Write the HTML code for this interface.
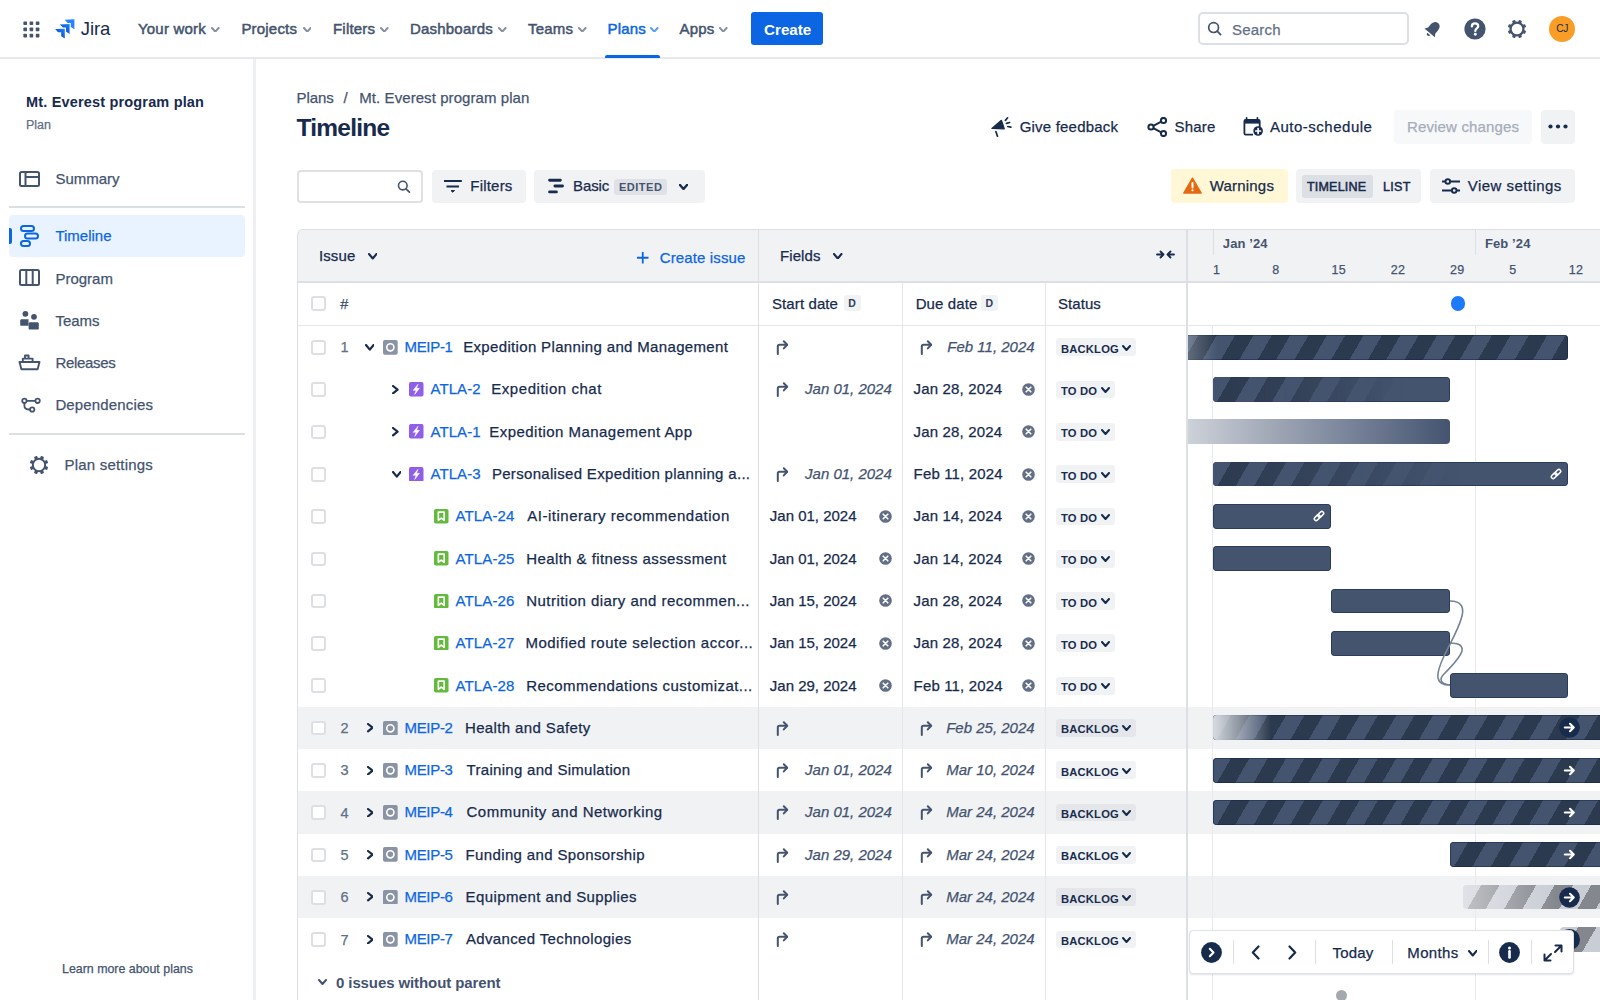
<!DOCTYPE html>
<html><head><meta charset="utf-8">
<style>
*{box-sizing:border-box;margin:0;padding:0}
html,body{width:1600px;height:1000px;overflow:hidden;background:#fff;font-family:"Liberation Sans",sans-serif;color:#172B4D}
.a{position:absolute;white-space:nowrap}
.m{-webkit-text-stroke:0.25px currentColor}
.m2{-webkit-text-stroke:0.5px currentColor}
svg{display:block}
</style></head><body>
<div class="a" style="left:0px;top:57px;width:1600px;height:2px;background:#E6E8EC;"></div>
<svg class="a" style="left:23px;top:20.5px;" width="17" height="17" viewBox="0 0 17 17"><g fill="#44546F"><rect x="0.4" y="0.4" width="3.6" height="3.6" rx="0.7"/><rect x="0.4" y="6.6" width="3.6" height="3.6" rx="0.7"/><rect x="0.4" y="12.8" width="3.6" height="3.6" rx="0.7"/><rect x="6.6" y="0.4" width="3.6" height="3.6" rx="0.7"/><rect x="6.6" y="6.6" width="3.6" height="3.6" rx="0.7"/><rect x="6.6" y="12.8" width="3.6" height="3.6" rx="0.7"/><rect x="12.8" y="0.4" width="3.6" height="3.6" rx="0.7"/><rect x="12.8" y="6.6" width="3.6" height="3.6" rx="0.7"/><rect x="12.8" y="12.8" width="3.6" height="3.6" rx="0.7"/></g></svg>
<svg class="a" style="left:54.5px;top:19px;" width="21" height="20" viewBox="0 0 21 20"><defs><linearGradient id="jg1" x1="1" y1="0" x2="0.3" y2="0.7"><stop offset="0" stop-color="#2684FF"/><stop offset="1" stop-color="#0052CC"/></linearGradient></defs><path transform="translate(9.7 0.3)" d="M0 0.4 L9.7 0 L9.7 9.9 L6.1 7.6 L6.1 3.6 L3.0 3.6 Z" fill="#2684FF"/><path transform="translate(4.9 5.0)" d="M0 0.4 L9.7 0 L9.7 9.9 L6.1 7.6 L6.1 3.6 L3.0 3.6 Z" fill="url(#jg1)"/><path transform="translate(0.1 9.7)" d="M0 0.4 L9.7 0 L9.7 9.9 L6.1 7.6 L6.1 3.6 L3.0 3.6 Z" fill="url(#jg1)"/></svg>
<div class="a " style="left:80.80px;top:19.59px;font-size:18.5px;line-height:18.5px;color:#172B4D;font-weight:400;font-style:normal;letter-spacing:-0.1px;">Jira</div>
<div class="a m2" style="left:138.00px;top:21.14px;font-size:15px;line-height:15px;color:#44546F;font-weight:400;font-style:normal;letter-spacing:0.2px;">Your work</div>
<svg class="a" style="left:211.3px;top:26.6px;" width="8.6" height="5.6" viewBox="0 0 8.6 5.6"><path d="M1 1L4.3 4.6L7.6 1" fill="none" stroke="#8590A2" stroke-width="2.0" stroke-linecap="round" stroke-linejoin="round"/></svg>
<div class="a m2" style="left:241.40px;top:21.14px;font-size:15px;line-height:15px;color:#44546F;font-weight:400;font-style:normal;letter-spacing:0.2px;">Projects</div>
<svg class="a" style="left:302.90000000000003px;top:26.6px;" width="8.6" height="5.6" viewBox="0 0 8.6 5.6"><path d="M1 1L4.3 4.6L7.6 1" fill="none" stroke="#8590A2" stroke-width="2.0" stroke-linecap="round" stroke-linejoin="round"/></svg>
<div class="a m2" style="left:333.00px;top:21.14px;font-size:15px;line-height:15px;color:#44546F;font-weight:400;font-style:normal;letter-spacing:0.2px;">Filters</div>
<svg class="a" style="left:380.3px;top:26.6px;" width="8.6" height="5.6" viewBox="0 0 8.6 5.6"><path d="M1 1L4.3 4.6L7.6 1" fill="none" stroke="#8590A2" stroke-width="2.0" stroke-linecap="round" stroke-linejoin="round"/></svg>
<div class="a m2" style="left:410.00px;top:21.14px;font-size:15px;line-height:15px;color:#44546F;font-weight:400;font-style:normal;letter-spacing:0.2px;">Dashboards</div>
<svg class="a" style="left:498.1px;top:26.6px;" width="8.6" height="5.6" viewBox="0 0 8.6 5.6"><path d="M1 1L4.3 4.6L7.6 1" fill="none" stroke="#8590A2" stroke-width="2.0" stroke-linecap="round" stroke-linejoin="round"/></svg>
<div class="a m2" style="left:528.00px;top:21.14px;font-size:15px;line-height:15px;color:#44546F;font-weight:400;font-style:normal;letter-spacing:0.2px;">Teams</div>
<svg class="a" style="left:578.3px;top:26.6px;" width="8.6" height="5.6" viewBox="0 0 8.6 5.6"><path d="M1 1L4.3 4.6L7.6 1" fill="none" stroke="#8590A2" stroke-width="2.0" stroke-linecap="round" stroke-linejoin="round"/></svg>
<div class="a m2" style="left:607.50px;top:21.14px;font-size:15px;line-height:15px;color:#0C66E4;font-weight:400;font-style:normal;letter-spacing:0.2px;">Plans</div>
<svg class="a" style="left:650.3px;top:26.6px;" width="8.6" height="5.6" viewBox="0 0 8.6 5.6"><path d="M1 1L4.3 4.6L7.6 1" fill="none" stroke="#579DFF" stroke-width="2.0" stroke-linecap="round" stroke-linejoin="round"/></svg>
<div class="a m2" style="left:679.50px;top:21.14px;font-size:15px;line-height:15px;color:#44546F;font-weight:400;font-style:normal;letter-spacing:0.2px;">Apps</div>
<svg class="a" style="left:719.3px;top:26.6px;" width="8.6" height="5.6" viewBox="0 0 8.6 5.6"><path d="M1 1L4.3 4.6L7.6 1" fill="none" stroke="#8590A2" stroke-width="2.0" stroke-linecap="round" stroke-linejoin="round"/></svg>
<div class="a" style="left:605px;top:55px;width:55px;height:3px;background:#0C66E4;border-radius:2px 2px 0 0"></div>
<div class="a" style="left:751px;top:12px;width:72px;height:33px;background:#0C66E4;border-radius:3px"></div>
<div class="a " style="left:764.00px;top:21.62px;font-size:15.2px;line-height:15.2px;color:#fff;font-weight:700;font-style:normal;letter-spacing:0px;">Create</div>
<div class="a" style="left:1198px;top:12px;width:211px;height:33px;border:2px solid #DCDFE4;border-radius:5px;background:#fff"></div>
<svg class="a" style="left:1207px;top:21px;" width="16" height="16" viewBox="0 0 16 16"><circle cx="6.6" cy="6.6" r="4.9" fill="none" stroke="#44546F" stroke-width="1.7"/><path d="M10.2 10.2L13.6 13.6" stroke="#44546F" stroke-width="1.8" stroke-linecap="round"/></svg>
<div class="a m" style="left:1232.00px;top:21.64px;font-size:15px;line-height:15px;color:#626F86;font-weight:400;font-style:normal;letter-spacing:0.2px;">Search</div>
<svg class="a" style="left:1422px;top:18px;" width="22" height="22" viewBox="0 0 22 22"><g transform="rotate(40 11 11)" fill="#44546F"><path d="M11 3.2C7.6 3.2 6.3 6 6.3 9.2V13L4.2 16.2H17.8L15.7 13V9.2C15.7 6 14.4 3.2 11 3.2Z"/><path d="M9 17.6H13C13 18.8 12.1 19.6 11 19.6C9.9 19.6 9 18.8 9 17.6Z"/></g></svg>
<svg class="a" style="left:1464px;top:17.5px;" width="22" height="22" viewBox="0 0 22 22"><circle cx="11" cy="11" r="10.6" fill="#44546F"/><path d="M7.9 8.4C7.9 6.5 9.3 5.4 11 5.4C12.8 5.4 14.2 6.5 14.2 8.2C14.2 10.4 11.3 10.5 11.3 12.9" fill="none" stroke="#fff" stroke-width="2.3" stroke-linecap="round"/><circle cx="11.3" cy="16.3" r="1.45" fill="#fff"/></svg>
<svg class="a" style="left:1507.2px;top:18.7px;" width="20" height="20" viewBox="0 0 20 20"><circle cx="10.0" cy="10.0" r="7.6" fill="#44546F"/><rect x="8.35" y="0.6999999999999993" width="3.3" height="9.3" rx="0.8" fill="#44546F" transform="rotate(22.5 10.0 10.0)"/><rect x="8.35" y="0.6999999999999993" width="3.3" height="9.3" rx="0.8" fill="#44546F" transform="rotate(67.5 10.0 10.0)"/><rect x="8.35" y="0.6999999999999993" width="3.3" height="9.3" rx="0.8" fill="#44546F" transform="rotate(112.5 10.0 10.0)"/><rect x="8.35" y="0.6999999999999993" width="3.3" height="9.3" rx="0.8" fill="#44546F" transform="rotate(157.5 10.0 10.0)"/><rect x="8.35" y="0.6999999999999993" width="3.3" height="9.3" rx="0.8" fill="#44546F" transform="rotate(202.5 10.0 10.0)"/><rect x="8.35" y="0.6999999999999993" width="3.3" height="9.3" rx="0.8" fill="#44546F" transform="rotate(247.5 10.0 10.0)"/><rect x="8.35" y="0.6999999999999993" width="3.3" height="9.3" rx="0.8" fill="#44546F" transform="rotate(292.5 10.0 10.0)"/><rect x="8.35" y="0.6999999999999993" width="3.3" height="9.3" rx="0.8" fill="#44546F" transform="rotate(337.5 10.0 10.0)"/><circle cx="10.0" cy="10.0" r="5.3" fill="#fff"/></svg>
<div class="a" style="left:1548.5px;top:15.5px;width:26px;height:26px;border-radius:50%;background:#F99D26"></div>
<div class="a " style="left:1556.30px;top:23.87px;font-size:10.2px;line-height:10.2px;color:#172B4D;font-weight:400;font-style:normal;letter-spacing:-0.3px;">CJ</div>
<div class="a" style="left:253px;top:59px;width:3px;height:941px;background:#EEEFF2;"></div>
<div class="a " style="left:26.00px;top:95.11px;font-size:14.5px;line-height:14.5px;color:#172B4D;font-weight:700;font-style:normal;letter-spacing:0.17px;">Mt. Everest program plan</div>
<div class="a m" style="left:26.00px;top:119.37px;font-size:12.5px;line-height:12.5px;color:#626F86;font-weight:400;font-style:normal;letter-spacing:0px;">Plan</div>
<svg class="a" style="left:19px;top:171px;" width="21" height="16" viewBox="0 0 21 16"><rect x="1" y="1" width="19" height="14" rx="1.5" fill="none" stroke="#44546F" stroke-width="2"/><path d="M6.5 1V15M6.5 6H20" stroke="#44546F" stroke-width="2"/></svg>
<div class="a m" style="left:55.40px;top:170.84px;font-size:15px;line-height:15px;color:#44546F;font-weight:400;font-style:normal;letter-spacing:0px;">Summary</div>
<div class="a" style="left:9px;top:206px;width:236px;height:2px;background:#DCDFE4;"></div>
<div class="a" style="left:9px;top:215px;width:236px;height:41.6px;background:#E9F2FF;border-radius:4px"></div>
<div class="a" style="left:9px;top:228px;width:3.4px;height:16px;background:#0C66E4;border-radius:0 2px 2px 0"></div>
<svg class="a" style="left:20px;top:225px;" width="19" height="22" viewBox="0 0 19 22"><g fill="none" stroke="#0C66E4" stroke-width="2"><rect x="1" y="1" width="13" height="5" rx="2.5"/><rect x="5" y="8.5" width="13" height="5" rx="2.5"/><rect x="1" y="16" width="9" height="5" rx="2.5"/></g></svg>
<div class="a m" style="left:55.40px;top:228.44px;font-size:15px;line-height:15px;color:#0C66E4;font-weight:400;font-style:normal;letter-spacing:0px;">Timeline</div>
<svg class="a" style="left:19px;top:269px;" width="21" height="17" viewBox="0 0 21 17"><g fill="none" stroke="#44546F" stroke-width="2"><rect x="1" y="1" width="19" height="15" rx="1.5"/><path d="M7.3 1V16M13.7 1V16"/></g></svg>
<div class="a m" style="left:55.40px;top:270.54px;font-size:15px;line-height:15px;color:#44546F;font-weight:400;font-style:normal;letter-spacing:0px;">Program</div>
<svg class="a" style="left:19px;top:310px;" width="21" height="21" viewBox="0 0 21 21"><g fill="#44546F"><circle cx="6.4" cy="3.8" r="2.9"/><path d="M1.2 10.6C1.2 9.8 1.9 9.2 2.7 9.2H9.5V15.8H2.2C1.6 15.8 1.2 15.4 1.2 14.8Z"/><circle cx="15" cy="6.8" r="2.9"/><path d="M9.6 13.6C9.6 12.8 10.3 12.2 11.1 12.2H18.3C19.1 12.2 19.8 12.8 19.8 13.6V18.4C19.8 19 19.4 19.4 18.8 19.4H10.6C10 19.4 9.6 19 9.6 18.4Z"/></g></svg>
<div class="a m" style="left:55.40px;top:313.04px;font-size:15px;line-height:15px;color:#44546F;font-weight:400;font-style:normal;letter-spacing:0px;">Teams</div>
<svg class="a" style="left:18px;top:354px;" width="23" height="17" viewBox="0 0 23 17"><g fill="none" stroke="#44546F" stroke-width="1.9" stroke-linejoin="round"><path d="M1.5 8H21.5L19.6 15.2H3.4Z"/><path d="M4.8 8V4.6H14.6V8"/><path d="M7 4.6V1.5H10.6V4.6"/></g></svg>
<div class="a m" style="left:55.40px;top:354.64px;font-size:15px;line-height:15px;color:#44546F;font-weight:400;font-style:normal;letter-spacing:-0.3px;">Releases</div>
<svg class="a" style="left:19px;top:396px;" width="22" height="17" viewBox="0 0 22 17"><g fill="none" stroke="#44546F" stroke-width="1.8"><circle cx="5.4" cy="4.8" r="2.2"/><circle cx="18.6" cy="4.8" r="2.2"/><circle cx="13.2" cy="13.5" r="2.2"/><path d="M7.6 4.8H16.4M5.4 7V9.6C5.4 12.2 7 13.5 9.5 13.5H11"/></g></svg>
<div class="a m" style="left:55.40px;top:397.34px;font-size:15px;line-height:15px;color:#44546F;font-weight:400;font-style:normal;letter-spacing:0.15px;">Dependencies</div>
<div class="a" style="left:9px;top:433px;width:236px;height:2px;background:#DCDFE4;"></div>
<svg class="a" style="left:28.5px;top:454.5px;" width="20" height="20" viewBox="0 0 20 20"><circle cx="10.0" cy="10.0" r="7.2" fill="#44546F"/><rect x="8.3" y="0.6999999999999993" width="3.4" height="9.3" rx="0.8" fill="#44546F" transform="rotate(22.5 10.0 10.0)"/><rect x="8.3" y="0.6999999999999993" width="3.4" height="9.3" rx="0.8" fill="#44546F" transform="rotate(67.5 10.0 10.0)"/><rect x="8.3" y="0.6999999999999993" width="3.4" height="9.3" rx="0.8" fill="#44546F" transform="rotate(112.5 10.0 10.0)"/><rect x="8.3" y="0.6999999999999993" width="3.4" height="9.3" rx="0.8" fill="#44546F" transform="rotate(157.5 10.0 10.0)"/><rect x="8.3" y="0.6999999999999993" width="3.4" height="9.3" rx="0.8" fill="#44546F" transform="rotate(202.5 10.0 10.0)"/><rect x="8.3" y="0.6999999999999993" width="3.4" height="9.3" rx="0.8" fill="#44546F" transform="rotate(247.5 10.0 10.0)"/><rect x="8.3" y="0.6999999999999993" width="3.4" height="9.3" rx="0.8" fill="#44546F" transform="rotate(292.5 10.0 10.0)"/><rect x="8.3" y="0.6999999999999993" width="3.4" height="9.3" rx="0.8" fill="#44546F" transform="rotate(337.5 10.0 10.0)"/><circle cx="10.0" cy="10.0" r="5.2" fill="#fff"/></svg>
<div class="a m" style="left:64.50px;top:456.54px;font-size:15px;line-height:15px;color:#44546F;font-weight:400;font-style:normal;letter-spacing:0.2px;">Plan settings</div>
<div class="a m" style="left:62.00px;top:963.38px;font-size:12.4px;line-height:12.4px;color:#44546F;font-weight:400;font-style:normal;letter-spacing:0px;">Learn more about plans</div>
<div class="a m" style="left:296.60px;top:90.34px;font-size:15px;line-height:15px;color:#44546F;font-weight:400;font-style:normal;letter-spacing:-0.1px;">Plans</div>
<div class="a m" style="left:343.50px;top:90.34px;font-size:15px;line-height:15px;color:#44546F;font-weight:400;font-style:normal;letter-spacing:0px;">/</div>
<div class="a m" style="left:359.30px;top:90.34px;font-size:15px;line-height:15px;color:#44546F;font-weight:400;font-style:normal;letter-spacing:0.07px;">Mt. Everest program plan</div>
<div class="a " style="left:296.50px;top:116.00px;font-size:24.5px;line-height:24.5px;color:#172B4D;font-weight:700;font-style:normal;letter-spacing:-0.75px;">Timeline</div>
<svg class="a" style="left:985px;top:110px;" width="30" height="30" viewBox="985 110 30 30"><path d="M991.9 128.4 L1001.4 120.3 L1004.3 128.8 Z" fill="#172B4D" stroke="#172B4D" stroke-width="1.2" stroke-linejoin="round"/><g stroke="#172B4D" stroke-width="1.7" stroke-linecap="round"><path d="M995.9 131.6L997.5 136.2M1005.4 120.4L1007.6 117.8M1006.5 123.4L1009.6 122.5M1007.8 126.5L1010.8 127.2"/></g></svg>
<div class="a m" style="left:1019.70px;top:118.94px;font-size:15px;line-height:15px;color:#172B4D;font-weight:400;font-style:normal;letter-spacing:0.2px;">Give feedback</div>
<svg class="a" style="left:1147px;top:117px;" width="21" height="20" viewBox="0 0 21 20"><g fill="none" stroke="#172B4D" stroke-width="2"><circle cx="4" cy="10" r="2.6"/><circle cx="16.5" cy="3.5" r="2.6"/><circle cx="16.5" cy="16.5" r="2.6"/><path d="M6.3 8.8L14.2 4.7M6.3 11.2L14.2 15.3"/></g></svg>
<div class="a m" style="left:1174.50px;top:118.94px;font-size:15px;line-height:15px;color:#172B4D;font-weight:400;font-style:normal;letter-spacing:0.2px;">Share</div>
<svg class="a" style="left:1240px;top:114px;" width="26" height="26" viewBox="1240 114 26 26"><path d="M1253 134.6H1245.6C1244.9 134.6 1244.4 134.1 1244.4 133.4V121.2C1244.4 120.5 1244.9 120 1245.6 120H1258.5C1259.2 120 1259.7 120.5 1259.7 121.2V127" fill="none" stroke="#172B4D" stroke-width="1.8"/><path d="M1244.4 120.8H1259.7V123.6H1244.4Z" fill="#172B4D"/><path d="M1246.6 117.8V121M1257.4 117.8V121" stroke="#172B4D" stroke-width="1.7" stroke-linecap="round"/><circle cx="1258.1" cy="131" r="4.8" fill="#172B4D"/><path d="M1258.1 128.6V133.4M1255.7 131H1260.5" stroke="#fff" stroke-width="1.7" stroke-linecap="round"/></svg>
<div class="a m" style="left:1270.00px;top:118.94px;font-size:15px;line-height:15px;color:#172B4D;font-weight:400;font-style:normal;letter-spacing:0.5px;">Auto-schedule</div>
<div class="a" style="left:1394px;top:110px;width:138px;height:33.6px;background:#F7F8F9;border-radius:4px"></div>
<div class="a m" style="left:1407.00px;top:118.94px;font-size:15px;line-height:15px;color:#A5ADBA;font-weight:400;font-style:normal;letter-spacing:0.15px;">Review changes</div>
<div class="a" style="left:1541px;top:110px;width:33.6px;height:33.6px;background:#F1F2F4;border-radius:4px"></div>
<svg class="a" style="left:1548px;top:124px;" width="20" height="5" viewBox="0 0 20 5"><g fill="#172B4D"><circle cx="2.5" cy="2.5" r="2.1"/><circle cx="10" cy="2.5" r="2.1"/><circle cx="17.5" cy="2.5" r="2.1"/></g></svg>
<div class="a" style="left:296.6px;top:169.7px;width:126px;height:33px;border:2px solid #DFE1E6;border-radius:4px"></div>
<svg class="a" style="left:397px;top:180px;" width="14" height="13" viewBox="0 0 14 13"><circle cx="5.8" cy="5.6" r="4.3" fill="none" stroke="#44546F" stroke-width="1.6"/><path d="M9 8.9L12.4 12.2" stroke="#44546F" stroke-width="1.7" stroke-linecap="round"/></svg>
<div class="a" style="left:432px;top:169.7px;width:93.7px;height:33px;background:#F1F2F4;border-radius:4px"></div>
<svg class="a" style="left:443px;top:177px;" width="20" height="17" viewBox="0 0 20 17"><g stroke="#172B4D" stroke-width="2" stroke-linecap="butt"><path d="M1 4H18.8M3.5 9.4H16"/></g><path d="M8 13.6H11.5L9.75 15.2Z" fill="#172B4D" stroke="#172B4D" stroke-width="1" stroke-linejoin="round"/></svg>
<div class="a m" style="left:470.30px;top:178.44px;font-size:15px;line-height:15px;color:#172B4D;font-weight:400;font-style:normal;letter-spacing:0.2px;">Filters</div>
<div class="a" style="left:534px;top:169.7px;width:170.7px;height:33px;background:#F1F2F4;border-radius:4px"></div>
<svg class="a" style="left:547px;top:177px;" width="18" height="18" viewBox="0 0 18 18"><g stroke="#172B4D" stroke-width="2.5" stroke-linecap="round"><path d="M2.6 3.3H13.3M7.9 9H15.5M2.6 14.9H9.4" stroke-width="2.9"/></g></svg>
<div class="a m" style="left:573.00px;top:178.44px;font-size:15px;line-height:15px;color:#172B4D;font-weight:400;font-style:normal;letter-spacing:-0.1px;">Basic</div>
<div class="a" style="left:614px;top:179px;width:52.6px;height:16px;background:#DFE1E6;border-radius:3px"></div>
<div class="a " style="left:619.00px;top:181.86px;font-size:11px;line-height:11px;color:#44546F;font-weight:700;font-style:normal;letter-spacing:0.5px;">EDITED</div>
<svg class="a" style="left:679px;top:183.5px;" width="9" height="6" viewBox="0 0 9 6"><path d="M1 1L4.5 5L8 1" fill="none" stroke="#172B4D" stroke-width="2.4" stroke-linecap="round" stroke-linejoin="round"/></svg>
<div class="a" style="left:1170.7px;top:169.4px;width:117px;height:33.6px;background:#FFF7D6;border-radius:4px"></div>
<svg class="a" style="left:1183px;top:177px;" width="19" height="17" viewBox="0 0 19 17"><path d="M9.5 1.2 L18.2 16 H0.8 Z" fill="#E56910" stroke="#E56910" stroke-width="1.4" stroke-linejoin="round"/><path d="M9.5 6V10.5" stroke="#fff" stroke-width="2" stroke-linecap="round"/><circle cx="9.5" cy="13.3" r="1.1" fill="#fff"/></svg>
<div class="a m" style="left:1209.70px;top:178.44px;font-size:15px;line-height:15px;color:#172B4D;font-weight:400;font-style:normal;letter-spacing:0.2px;">Warnings</div>
<div class="a" style="left:1296.3px;top:169.4px;width:124.5px;height:33.6px;background:#F1F2F4;border-radius:4px"></div>
<div class="a" style="left:1301.7px;top:174.8px;width:71.3px;height:22.8px;background:#DCDFE4;border-radius:3px"></div>
<div class="a m2" style="left:1307.00px;top:181.07px;font-size:12.5px;line-height:12.5px;color:#172B4D;font-weight:400;font-style:normal;letter-spacing:0.2px;">TIMELINE</div>
<div class="a m2" style="left:1383.00px;top:181.07px;font-size:12.5px;line-height:12.5px;color:#172B4D;font-weight:400;font-style:normal;letter-spacing:0.3px;">LIST</div>
<div class="a" style="left:1430px;top:169.4px;width:144.8px;height:33.6px;background:#F1F2F4;border-radius:4px"></div>
<svg class="a" style="left:1440px;top:177px;" width="22" height="18" viewBox="0 0 22 18"><g fill="none" stroke="#172B4D" stroke-width="1.9"><path d="M2 4.5H5.5M10 4.5H20M2 13.5H12M16.5 13.5H20"/><circle cx="7.8" cy="4.5" r="2.3"/><circle cx="14.2" cy="13.5" r="2.3"/></g></svg>
<div class="a m" style="left:1467.80px;top:178.44px;font-size:15px;line-height:15px;color:#172B4D;font-weight:400;font-style:normal;letter-spacing:0.45px;">View settings</div>
<div class="a" style="left:296.5px;top:229px;width:1400px;height:52px;background:#F1F2F4;border-top:1.5px solid #DCDFE4;border-left:1.5px solid #DCDFE4;border-top-left-radius:6px"></div>
<div class="a" style="left:296.5px;top:281px;width:1304px;height:2px;background:#DCDFE4;"></div>
<div class="a" style="left:296.5px;top:325px;width:1304px;height:1px;background:#E4E6EA;"></div>
<div class="a" style="left:297.5px;top:706.7px;width:1303px;height:42.3px;background:#F1F2F4;"></div>
<div class="a" style="left:297.5px;top:791.3px;width:1303px;height:42.3px;background:#F1F2F4;"></div>
<div class="a" style="left:297.5px;top:875.9px;width:1303px;height:42.3px;background:#F1F2F4;"></div>
<div class="a" style="left:296.5px;top:283px;width:1.5px;height:717px;background:#DCDFE4;"></div>
<div class="a" style="left:758px;top:229px;width:1px;height:771px;background:#DCDFE4;"></div>
<div class="a" style="left:902px;top:283px;width:1px;height:717px;background:#E4E6EA;"></div>
<div class="a" style="left:1045px;top:283px;width:1px;height:717px;background:#E4E6EA;"></div>
<div class="a" style="left:1186px;top:229px;width:1.8px;height:771px;background:#DCDFE4;"></div>
<div class="a m" style="left:319.00px;top:248.24px;font-size:15px;line-height:15px;color:#172B4D;font-weight:400;font-style:normal;letter-spacing:0.1px;">Issue</div>
<svg class="a" style="left:367.8px;top:253px;" width="9.5" height="6.5" viewBox="0 0 9.5 6.5"><path d="M1 1L4.75 5.5L8.5 1" fill="none" stroke="#172B4D" stroke-width="2.1" stroke-linecap="round" stroke-linejoin="round"/></svg>
<svg class="a" style="left:635.5px;top:250.5px;" width="13.5" height="13.5" viewBox="0 0 13.5 13.5"><path d="M6.75 1V12.5M1 6.75H12.5" stroke="#0C66E4" stroke-width="1.8"/></svg>
<div class="a m" style="left:659.80px;top:249.64px;font-size:15px;line-height:15px;color:#0C66E4;font-weight:400;font-style:normal;letter-spacing:0.12px;">Create issue</div>
<div class="a m" style="left:780.00px;top:247.74px;font-size:15px;line-height:15px;color:#172B4D;font-weight:400;font-style:normal;letter-spacing:0.08px;">Fields</div>
<svg class="a" style="left:833px;top:252.5px;" width="9.5" height="6.5" viewBox="0 0 9.5 6.5"><path d="M1 1L4.75 5.5L8.5 1" fill="none" stroke="#172B4D" stroke-width="2.1" stroke-linecap="round" stroke-linejoin="round"/></svg>
<svg class="a" style="left:1156px;top:249.5px;" width="19" height="9" viewBox="0 0 19 9"><g fill="none" stroke="#172B4D" stroke-width="1.8" stroke-linecap="round" stroke-linejoin="round"><path d="M1 4.5H7.5M4.5 1.5L7.5 4.5L4.5 7.5M18 4.5H11.5M14.5 1.5L11.5 4.5L14.5 7.5"/></g></svg>
<div class="a" style="left:311px;top:296.40px;width:14.6px;height:14.6px;border:2px solid #DCDFE4;border-radius:3px;background:#fff"></div>
<div class="a m" style="left:340.00px;top:296.61px;font-size:14.5px;line-height:14.5px;color:#44546F;font-weight:400;font-style:italic;letter-spacing:0px;">#</div>
<div class="a m" style="left:772.00px;top:296.04px;font-size:15px;line-height:15px;color:#172B4D;font-weight:400;font-style:normal;letter-spacing:0.1px;">Start date</div>
<div class="a" style="left:843.5px;top:295.2px;width:17px;height:16.3px;background:#F1F2F4;border-radius:3px"></div>
<div class="a " style="left:848.20px;top:298.13px;font-size:10.5px;line-height:10.5px;color:#2C3E5D;font-weight:700;font-style:normal;letter-spacing:0px;">D</div>
<div class="a m" style="left:915.70px;top:296.04px;font-size:15px;line-height:15px;color:#172B4D;font-weight:400;font-style:normal;letter-spacing:0.1px;">Due date</div>
<div class="a" style="left:981px;top:295.2px;width:16.5px;height:16.3px;background:#F1F2F4;border-radius:3px"></div>
<div class="a " style="left:985.60px;top:298.13px;font-size:10.5px;line-height:10.5px;color:#2C3E5D;font-weight:700;font-style:normal;letter-spacing:0px;">D</div>
<div class="a m" style="left:1058.00px;top:296.04px;font-size:15px;line-height:15px;color:#172B4D;font-weight:400;font-style:normal;letter-spacing:0.05px;">Status</div>
<div class="a" style="left:311px;top:340.05px;width:14.6px;height:14.6px;border:2px solid #DCDFE4;border-radius:3px;background:#fff"></div>
<div class="a m" style="left:340.40px;top:340.36px;font-size:14.5px;line-height:14.5px;color:#626F86;font-weight:400;font-style:normal;letter-spacing:0px;">1</div>
<svg class="a" style="left:364.5px;top:344.15px;" width="9.6" height="6.6" viewBox="0 0 9.6 6.6"><path d="M1 1L4.8 5.6L8.6 1" fill="none" stroke="#172B4D" stroke-width="2.2" stroke-linecap="round" stroke-linejoin="round"/></svg>
<svg class="a" style="left:383px;top:339.84999999999997px;" width="14.7" height="14.7" viewBox="0 0 16 16"><rect width="16" height="16" rx="2" fill="#8993A4"/><circle cx="8" cy="8" r="3.9" fill="none" stroke="#fff" stroke-width="1.8"/></svg>
<div class="a m" style="left:404.45px;top:339.19px;font-size:15px;line-height:15px;color:#0C66E4;font-weight:400;font-style:normal;letter-spacing:-0.3px;">MEIP-1</div>
<div class="a m" style="left:463.15px;top:339.19px;font-size:15px;line-height:15px;color:#172B4D;font-weight:400;font-style:normal;letter-spacing:0.34090909090909094px;">Expedition Planning and Management</div>
<svg class="a" style="left:776px;top:339.15px;" width="13" height="16" viewBox="0 0 13 16"><g fill="none" stroke="#44546F" stroke-width="2" stroke-linecap="round" stroke-linejoin="round"><path d="M1.8 15V7.5C1.8 6.5 2.5 5.8 3.5 5.8H11"/><path d="M7.8 2.2L11.2 5.8L7.8 9.4"/></g></svg>
<svg class="a" style="left:919.5px;top:339.15px;" width="13" height="16" viewBox="0 0 13 16"><g fill="none" stroke="#44546F" stroke-width="2" stroke-linecap="round" stroke-linejoin="round"><path d="M1.8 15V7.5C1.8 6.5 2.5 5.8 3.5 5.8H11"/><path d="M7.8 2.2L11.2 5.8L7.8 9.4"/></g></svg>
<div class="a m" style="right:565.40px;top:339.19px;font-size:15px;line-height:15px;color:#44546F;font-weight:400;font-style:italic;letter-spacing:0px;">Feb 11, 2024</div>
<div class="a" style="left:1056.2px;top:338.34999999999997px;width:80.2px;height:17.8px;background:#F1F2F4;border-radius:3px"></div>
<div class="a " style="left:1061.00px;top:343.79px;font-size:11.2px;line-height:11.2px;color:#172B4D;font-weight:700;font-style:normal;letter-spacing:0.2px;">BACKLOG</div>
<svg class="a" style="left:1121.9px;top:344.65px;" width="9" height="6" viewBox="0 0 9 6"><path d="M1 1L4.5 5L8 1" fill="none" stroke="#172B4D" stroke-width="2" stroke-linecap="round" stroke-linejoin="round"/></svg>
<div class="a" style="left:311px;top:382.35px;width:14.6px;height:14.6px;border:2px solid #DCDFE4;border-radius:3px;background:#fff"></div>
<svg class="a" style="left:392px;top:384.84999999999997px;" width="6.6" height="9.4" viewBox="0 0 6.6 9.4"><path d="M1 1L5.6 4.7L1 8.4" fill="none" stroke="#172B4D" stroke-width="2.2" stroke-linecap="round" stroke-linejoin="round"/></svg>
<svg class="a" style="left:409px;top:382.15px;" width="14.5" height="14.7" viewBox="0 0 16 16"><rect width="16" height="16" rx="2" fill="#8F5FE8"/><path d="M9.9 2.4L4.6 9.1H7.9L6.3 13.6L11.5 6.9H8.3Z" fill="#fff" stroke="#fff" stroke-width="0.6" stroke-linejoin="round"/></svg>
<div class="a m" style="left:430.40px;top:381.49px;font-size:15px;line-height:15px;color:#0C66E4;font-weight:400;font-style:normal;letter-spacing:0.1px;">ATLA-2</div>
<div class="a m" style="left:491.30px;top:381.49px;font-size:15px;line-height:15px;color:#172B4D;font-weight:400;font-style:normal;letter-spacing:0.5357142857142857px;">Expedition chat</div>
<svg class="a" style="left:776px;top:381.45px;" width="13" height="16" viewBox="0 0 13 16"><g fill="none" stroke="#44546F" stroke-width="2" stroke-linecap="round" stroke-linejoin="round"><path d="M1.8 15V7.5C1.8 6.5 2.5 5.8 3.5 5.8H11"/><path d="M7.8 2.2L11.2 5.8L7.8 9.4"/></g></svg>
<div class="a m" style="right:708.20px;top:381.49px;font-size:15px;line-height:15px;color:#44546F;font-weight:400;font-style:italic;letter-spacing:0px;">Jan 01, 2024</div>
<div class="a m" style="left:913.60px;top:381.49px;font-size:15px;line-height:15px;color:#172B4D;font-weight:400;font-style:normal;letter-spacing:0.15px;">Jan 28, 2024</div>
<svg class="a" style="left:1022px;top:382.95px;" width="13" height="13" viewBox="0 0 13 13"><circle cx="6.5" cy="6.5" r="6.3" fill="#626F86"/><path d="M4.2 4.2L8.8 8.8M8.8 4.2L4.2 8.8" stroke="#fff" stroke-width="1.6" stroke-linecap="round"/></svg>
<div class="a" style="left:1056.2px;top:380.65px;width:59.1px;height:17.8px;background:#F1F2F4;border-radius:3px"></div>
<div class="a " style="left:1061.00px;top:386.09px;font-size:11.2px;line-height:11.2px;color:#172B4D;font-weight:700;font-style:normal;letter-spacing:0.2px;">TO DO</div>
<svg class="a" style="left:1100.8px;top:386.95px;" width="9" height="6" viewBox="0 0 9 6"><path d="M1 1L4.5 5L8 1" fill="none" stroke="#172B4D" stroke-width="2" stroke-linecap="round" stroke-linejoin="round"/></svg>
<div class="a" style="left:311px;top:424.65px;width:14.6px;height:14.6px;border:2px solid #DCDFE4;border-radius:3px;background:#fff"></div>
<svg class="a" style="left:392px;top:427.15px;" width="6.6" height="9.4" viewBox="0 0 6.6 9.4"><path d="M1 1L5.6 4.7L1 8.4" fill="none" stroke="#172B4D" stroke-width="2.2" stroke-linecap="round" stroke-linejoin="round"/></svg>
<svg class="a" style="left:409px;top:424.45px;" width="14.5" height="14.7" viewBox="0 0 16 16"><rect width="16" height="16" rx="2" fill="#8F5FE8"/><path d="M9.9 2.4L4.6 9.1H7.9L6.3 13.6L11.5 6.9H8.3Z" fill="#fff" stroke="#fff" stroke-width="0.6" stroke-linejoin="round"/></svg>
<div class="a m" style="left:430.40px;top:423.79px;font-size:15px;line-height:15px;color:#0C66E4;font-weight:400;font-style:normal;letter-spacing:0.1px;">ATLA-1</div>
<div class="a m" style="left:489.30px;top:423.79px;font-size:15px;line-height:15px;color:#172B4D;font-weight:400;font-style:normal;letter-spacing:0.4541666666666667px;">Expedition Management App</div>
<div class="a m" style="left:913.60px;top:423.79px;font-size:15px;line-height:15px;color:#172B4D;font-weight:400;font-style:normal;letter-spacing:0.15px;">Jan 28, 2024</div>
<svg class="a" style="left:1022px;top:425.25px;" width="13" height="13" viewBox="0 0 13 13"><circle cx="6.5" cy="6.5" r="6.3" fill="#626F86"/><path d="M4.2 4.2L8.8 8.8M8.8 4.2L4.2 8.8" stroke="#fff" stroke-width="1.6" stroke-linecap="round"/></svg>
<div class="a" style="left:1056.2px;top:422.95px;width:59.1px;height:17.8px;background:#F1F2F4;border-radius:3px"></div>
<div class="a " style="left:1061.00px;top:428.39px;font-size:11.2px;line-height:11.2px;color:#172B4D;font-weight:700;font-style:normal;letter-spacing:0.2px;">TO DO</div>
<svg class="a" style="left:1100.8px;top:429.25px;" width="9" height="6" viewBox="0 0 9 6"><path d="M1 1L4.5 5L8 1" fill="none" stroke="#172B4D" stroke-width="2" stroke-linecap="round" stroke-linejoin="round"/></svg>
<div class="a" style="left:311px;top:466.95px;width:14.6px;height:14.6px;border:2px solid #DCDFE4;border-radius:3px;background:#fff"></div>
<svg class="a" style="left:391.5px;top:471.04999999999995px;" width="9.6" height="6.6" viewBox="0 0 9.6 6.6"><path d="M1 1L4.8 5.6L8.6 1" fill="none" stroke="#172B4D" stroke-width="2.2" stroke-linecap="round" stroke-linejoin="round"/></svg>
<svg class="a" style="left:409px;top:466.74999999999994px;" width="14.5" height="14.7" viewBox="0 0 16 16"><rect width="16" height="16" rx="2" fill="#8F5FE8"/><path d="M9.9 2.4L4.6 9.1H7.9L6.3 13.6L11.5 6.9H8.3Z" fill="#fff" stroke="#fff" stroke-width="0.6" stroke-linejoin="round"/></svg>
<div class="a m" style="left:430.40px;top:466.09px;font-size:15px;line-height:15px;color:#0C66E4;font-weight:400;font-style:normal;letter-spacing:0.1px;">ATLA-3</div>
<div class="a m" style="left:491.90px;top:466.09px;font-size:15px;line-height:15px;color:#172B4D;font-weight:400;font-style:normal;letter-spacing:0.3138888888888889px;">Personalised Expedition planning a...</div>
<svg class="a" style="left:776px;top:466.04999999999995px;" width="13" height="16" viewBox="0 0 13 16"><g fill="none" stroke="#44546F" stroke-width="2" stroke-linecap="round" stroke-linejoin="round"><path d="M1.8 15V7.5C1.8 6.5 2.5 5.8 3.5 5.8H11"/><path d="M7.8 2.2L11.2 5.8L7.8 9.4"/></g></svg>
<div class="a m" style="right:708.20px;top:466.09px;font-size:15px;line-height:15px;color:#44546F;font-weight:400;font-style:italic;letter-spacing:0px;">Jan 01, 2024</div>
<div class="a m" style="left:913.60px;top:466.09px;font-size:15px;line-height:15px;color:#172B4D;font-weight:400;font-style:normal;letter-spacing:0.15px;">Feb 11, 2024</div>
<svg class="a" style="left:1022px;top:467.54999999999995px;" width="13" height="13" viewBox="0 0 13 13"><circle cx="6.5" cy="6.5" r="6.3" fill="#626F86"/><path d="M4.2 4.2L8.8 8.8M8.8 4.2L4.2 8.8" stroke="#fff" stroke-width="1.6" stroke-linecap="round"/></svg>
<div class="a" style="left:1056.2px;top:465.24999999999994px;width:59.1px;height:17.8px;background:#F1F2F4;border-radius:3px"></div>
<div class="a " style="left:1061.00px;top:470.69px;font-size:11.2px;line-height:11.2px;color:#172B4D;font-weight:700;font-style:normal;letter-spacing:0.2px;">TO DO</div>
<svg class="a" style="left:1100.8px;top:471.54999999999995px;" width="9" height="6" viewBox="0 0 9 6"><path d="M1 1L4.5 5L8 1" fill="none" stroke="#172B4D" stroke-width="2" stroke-linecap="round" stroke-linejoin="round"/></svg>
<div class="a" style="left:311px;top:509.25px;width:14.6px;height:14.6px;border:2px solid #DCDFE4;border-radius:3px;background:#fff"></div>
<svg class="a" style="left:434px;top:509.05px;" width="14.5" height="14.5" viewBox="0 0 16 16"><rect width="16" height="16" rx="2" fill="#63BA3C"/><path d="M4.8 3.5H11.2V12.5L8 10L4.8 12.5Z" fill="none" stroke="#fff" stroke-width="1.8" stroke-linejoin="round"/></svg>
<div class="a m" style="left:455.60px;top:508.39px;font-size:15px;line-height:15px;color:#0C66E4;font-weight:400;font-style:normal;letter-spacing:0.1px;">ATLA-24</div>
<div class="a m" style="left:527.20px;top:508.39px;font-size:15px;line-height:15px;color:#172B4D;font-weight:400;font-style:normal;letter-spacing:0.5269230769230769px;">AI-itinerary recommendation</div>
<div class="a m" style="left:769.80px;top:508.39px;font-size:15px;line-height:15px;color:#172B4D;font-weight:400;font-style:normal;letter-spacing:0px;">Jan 01, 2024</div>
<svg class="a" style="left:879.2px;top:509.85px;" width="13" height="13" viewBox="0 0 13 13"><circle cx="6.5" cy="6.5" r="6.3" fill="#626F86"/><path d="M4.2 4.2L8.8 8.8M8.8 4.2L4.2 8.8" stroke="#fff" stroke-width="1.6" stroke-linecap="round"/></svg>
<div class="a m" style="left:913.60px;top:508.39px;font-size:15px;line-height:15px;color:#172B4D;font-weight:400;font-style:normal;letter-spacing:0.15px;">Jan 14, 2024</div>
<svg class="a" style="left:1022px;top:509.85px;" width="13" height="13" viewBox="0 0 13 13"><circle cx="6.5" cy="6.5" r="6.3" fill="#626F86"/><path d="M4.2 4.2L8.8 8.8M8.8 4.2L4.2 8.8" stroke="#fff" stroke-width="1.6" stroke-linecap="round"/></svg>
<div class="a" style="left:1056.2px;top:507.55px;width:59.1px;height:17.8px;background:#F1F2F4;border-radius:3px"></div>
<div class="a " style="left:1061.00px;top:512.99px;font-size:11.2px;line-height:11.2px;color:#172B4D;font-weight:700;font-style:normal;letter-spacing:0.2px;">TO DO</div>
<svg class="a" style="left:1100.8px;top:513.85px;" width="9" height="6" viewBox="0 0 9 6"><path d="M1 1L4.5 5L8 1" fill="none" stroke="#172B4D" stroke-width="2" stroke-linecap="round" stroke-linejoin="round"/></svg>
<div class="a" style="left:311px;top:551.55px;width:14.6px;height:14.6px;border:2px solid #DCDFE4;border-radius:3px;background:#fff"></div>
<svg class="a" style="left:434px;top:551.35px;" width="14.5" height="14.5" viewBox="0 0 16 16"><rect width="16" height="16" rx="2" fill="#63BA3C"/><path d="M4.8 3.5H11.2V12.5L8 10L4.8 12.5Z" fill="none" stroke="#fff" stroke-width="1.8" stroke-linejoin="round"/></svg>
<div class="a m" style="left:455.60px;top:550.69px;font-size:15px;line-height:15px;color:#0C66E4;font-weight:400;font-style:normal;letter-spacing:0.1px;">ATLA-25</div>
<div class="a m" style="left:526.20px;top:550.69px;font-size:15px;line-height:15px;color:#172B4D;font-weight:400;font-style:normal;letter-spacing:0.41538461538461535px;">Health &amp; fitness assessment</div>
<div class="a m" style="left:769.80px;top:550.69px;font-size:15px;line-height:15px;color:#172B4D;font-weight:400;font-style:normal;letter-spacing:0px;">Jan 01, 2024</div>
<svg class="a" style="left:879.2px;top:552.15px;" width="13" height="13" viewBox="0 0 13 13"><circle cx="6.5" cy="6.5" r="6.3" fill="#626F86"/><path d="M4.2 4.2L8.8 8.8M8.8 4.2L4.2 8.8" stroke="#fff" stroke-width="1.6" stroke-linecap="round"/></svg>
<div class="a m" style="left:913.60px;top:550.69px;font-size:15px;line-height:15px;color:#172B4D;font-weight:400;font-style:normal;letter-spacing:0.15px;">Jan 14, 2024</div>
<svg class="a" style="left:1022px;top:552.15px;" width="13" height="13" viewBox="0 0 13 13"><circle cx="6.5" cy="6.5" r="6.3" fill="#626F86"/><path d="M4.2 4.2L8.8 8.8M8.8 4.2L4.2 8.8" stroke="#fff" stroke-width="1.6" stroke-linecap="round"/></svg>
<div class="a" style="left:1056.2px;top:549.85px;width:59.1px;height:17.8px;background:#F1F2F4;border-radius:3px"></div>
<div class="a " style="left:1061.00px;top:555.29px;font-size:11.2px;line-height:11.2px;color:#172B4D;font-weight:700;font-style:normal;letter-spacing:0.2px;">TO DO</div>
<svg class="a" style="left:1100.8px;top:556.15px;" width="9" height="6" viewBox="0 0 9 6"><path d="M1 1L4.5 5L8 1" fill="none" stroke="#172B4D" stroke-width="2" stroke-linecap="round" stroke-linejoin="round"/></svg>
<div class="a" style="left:311px;top:593.85px;width:14.6px;height:14.6px;border:2px solid #DCDFE4;border-radius:3px;background:#fff"></div>
<svg class="a" style="left:434px;top:593.65px;" width="14.5" height="14.5" viewBox="0 0 16 16"><rect width="16" height="16" rx="2" fill="#63BA3C"/><path d="M4.8 3.5H11.2V12.5L8 10L4.8 12.5Z" fill="none" stroke="#fff" stroke-width="1.8" stroke-linejoin="round"/></svg>
<div class="a m" style="left:455.60px;top:592.99px;font-size:15px;line-height:15px;color:#0C66E4;font-weight:400;font-style:normal;letter-spacing:0.1px;">ATLA-26</div>
<div class="a m" style="left:526.20px;top:592.99px;font-size:15px;line-height:15px;color:#172B4D;font-weight:400;font-style:normal;letter-spacing:0.47px;">Nutrition diary and recommen...</div>
<div class="a m" style="left:769.80px;top:592.99px;font-size:15px;line-height:15px;color:#172B4D;font-weight:400;font-style:normal;letter-spacing:0px;">Jan 15, 2024</div>
<svg class="a" style="left:879.2px;top:594.4499999999999px;" width="13" height="13" viewBox="0 0 13 13"><circle cx="6.5" cy="6.5" r="6.3" fill="#626F86"/><path d="M4.2 4.2L8.8 8.8M8.8 4.2L4.2 8.8" stroke="#fff" stroke-width="1.6" stroke-linecap="round"/></svg>
<div class="a m" style="left:913.60px;top:592.99px;font-size:15px;line-height:15px;color:#172B4D;font-weight:400;font-style:normal;letter-spacing:0.15px;">Jan 28, 2024</div>
<svg class="a" style="left:1022px;top:594.4499999999999px;" width="13" height="13" viewBox="0 0 13 13"><circle cx="6.5" cy="6.5" r="6.3" fill="#626F86"/><path d="M4.2 4.2L8.8 8.8M8.8 4.2L4.2 8.8" stroke="#fff" stroke-width="1.6" stroke-linecap="round"/></svg>
<div class="a" style="left:1056.2px;top:592.15px;width:59.1px;height:17.8px;background:#F1F2F4;border-radius:3px"></div>
<div class="a " style="left:1061.00px;top:597.59px;font-size:11.2px;line-height:11.2px;color:#172B4D;font-weight:700;font-style:normal;letter-spacing:0.2px;">TO DO</div>
<svg class="a" style="left:1100.8px;top:598.4499999999999px;" width="9" height="6" viewBox="0 0 9 6"><path d="M1 1L4.5 5L8 1" fill="none" stroke="#172B4D" stroke-width="2" stroke-linecap="round" stroke-linejoin="round"/></svg>
<div class="a" style="left:311px;top:636.15px;width:14.6px;height:14.6px;border:2px solid #DCDFE4;border-radius:3px;background:#fff"></div>
<svg class="a" style="left:434px;top:635.9499999999999px;" width="14.5" height="14.5" viewBox="0 0 16 16"><rect width="16" height="16" rx="2" fill="#63BA3C"/><path d="M4.8 3.5H11.2V12.5L8 10L4.8 12.5Z" fill="none" stroke="#fff" stroke-width="1.8" stroke-linejoin="round"/></svg>
<div class="a m" style="left:455.60px;top:635.29px;font-size:15px;line-height:15px;color:#0C66E4;font-weight:400;font-style:normal;letter-spacing:0.1px;">ATLA-27</div>
<div class="a m" style="left:525.40px;top:635.29px;font-size:15px;line-height:15px;color:#172B4D;font-weight:400;font-style:normal;letter-spacing:0.5125px;">Modified route selection accor...</div>
<div class="a m" style="left:769.80px;top:635.29px;font-size:15px;line-height:15px;color:#172B4D;font-weight:400;font-style:normal;letter-spacing:0px;">Jan 15, 2024</div>
<svg class="a" style="left:879.2px;top:636.7499999999999px;" width="13" height="13" viewBox="0 0 13 13"><circle cx="6.5" cy="6.5" r="6.3" fill="#626F86"/><path d="M4.2 4.2L8.8 8.8M8.8 4.2L4.2 8.8" stroke="#fff" stroke-width="1.6" stroke-linecap="round"/></svg>
<div class="a m" style="left:913.60px;top:635.29px;font-size:15px;line-height:15px;color:#172B4D;font-weight:400;font-style:normal;letter-spacing:0.15px;">Jan 28, 2024</div>
<svg class="a" style="left:1022px;top:636.7499999999999px;" width="13" height="13" viewBox="0 0 13 13"><circle cx="6.5" cy="6.5" r="6.3" fill="#626F86"/><path d="M4.2 4.2L8.8 8.8M8.8 4.2L4.2 8.8" stroke="#fff" stroke-width="1.6" stroke-linecap="round"/></svg>
<div class="a" style="left:1056.2px;top:634.4499999999999px;width:59.1px;height:17.8px;background:#F1F2F4;border-radius:3px"></div>
<div class="a " style="left:1061.00px;top:639.89px;font-size:11.2px;line-height:11.2px;color:#172B4D;font-weight:700;font-style:normal;letter-spacing:0.2px;">TO DO</div>
<svg class="a" style="left:1100.8px;top:640.7499999999999px;" width="9" height="6" viewBox="0 0 9 6"><path d="M1 1L4.5 5L8 1" fill="none" stroke="#172B4D" stroke-width="2" stroke-linecap="round" stroke-linejoin="round"/></svg>
<div class="a" style="left:311px;top:678.45px;width:14.6px;height:14.6px;border:2px solid #DCDFE4;border-radius:3px;background:#fff"></div>
<svg class="a" style="left:434px;top:678.25px;" width="14.5" height="14.5" viewBox="0 0 16 16"><rect width="16" height="16" rx="2" fill="#63BA3C"/><path d="M4.8 3.5H11.2V12.5L8 10L4.8 12.5Z" fill="none" stroke="#fff" stroke-width="1.8" stroke-linejoin="round"/></svg>
<div class="a m" style="left:455.60px;top:677.59px;font-size:15px;line-height:15px;color:#0C66E4;font-weight:400;font-style:normal;letter-spacing:0.1px;">ATLA-28</div>
<div class="a m" style="left:526.20px;top:677.59px;font-size:15px;line-height:15px;color:#172B4D;font-weight:400;font-style:normal;letter-spacing:0.44999999999999996px;">Recommendations customizat...</div>
<div class="a m" style="left:769.80px;top:677.59px;font-size:15px;line-height:15px;color:#172B4D;font-weight:400;font-style:normal;letter-spacing:0px;">Jan 29, 2024</div>
<svg class="a" style="left:879.2px;top:679.05px;" width="13" height="13" viewBox="0 0 13 13"><circle cx="6.5" cy="6.5" r="6.3" fill="#626F86"/><path d="M4.2 4.2L8.8 8.8M8.8 4.2L4.2 8.8" stroke="#fff" stroke-width="1.6" stroke-linecap="round"/></svg>
<div class="a m" style="left:913.60px;top:677.59px;font-size:15px;line-height:15px;color:#172B4D;font-weight:400;font-style:normal;letter-spacing:0.15px;">Feb 11, 2024</div>
<svg class="a" style="left:1022px;top:679.05px;" width="13" height="13" viewBox="0 0 13 13"><circle cx="6.5" cy="6.5" r="6.3" fill="#626F86"/><path d="M4.2 4.2L8.8 8.8M8.8 4.2L4.2 8.8" stroke="#fff" stroke-width="1.6" stroke-linecap="round"/></svg>
<div class="a" style="left:1056.2px;top:676.75px;width:59.1px;height:17.8px;background:#F1F2F4;border-radius:3px"></div>
<div class="a " style="left:1061.00px;top:682.19px;font-size:11.2px;line-height:11.2px;color:#172B4D;font-weight:700;font-style:normal;letter-spacing:0.2px;">TO DO</div>
<svg class="a" style="left:1100.8px;top:683.05px;" width="9" height="6" viewBox="0 0 9 6"><path d="M1 1L4.5 5L8 1" fill="none" stroke="#172B4D" stroke-width="2" stroke-linecap="round" stroke-linejoin="round"/></svg>
<div class="a" style="left:311px;top:720.75px;width:14.6px;height:14.6px;border:2px solid #DCDFE4;border-radius:3px;background:#fff"></div>
<div class="a m" style="left:340.40px;top:721.06px;font-size:14.5px;line-height:14.5px;color:#626F86;font-weight:400;font-style:normal;letter-spacing:0px;">2</div>
<svg class="a" style="left:366.5px;top:723.25px;" width="6.6" height="9.4" viewBox="0 0 6.6 9.4"><path d="M1 1L5.6 4.7L1 8.4" fill="none" stroke="#172B4D" stroke-width="2.2" stroke-linecap="round" stroke-linejoin="round"/></svg>
<svg class="a" style="left:383px;top:720.5500000000001px;" width="14.7" height="14.7" viewBox="0 0 16 16"><rect width="16" height="16" rx="2" fill="#8993A4"/><circle cx="8" cy="8" r="3.9" fill="none" stroke="#fff" stroke-width="1.8"/></svg>
<div class="a m" style="left:404.45px;top:719.89px;font-size:15px;line-height:15px;color:#0C66E4;font-weight:400;font-style:normal;letter-spacing:-0.3px;">MEIP-2</div>
<div class="a m" style="left:464.95px;top:719.89px;font-size:15px;line-height:15px;color:#172B4D;font-weight:400;font-style:normal;letter-spacing:0.375px;">Health and Safety</div>
<svg class="a" style="left:776px;top:719.85px;" width="13" height="16" viewBox="0 0 13 16"><g fill="none" stroke="#44546F" stroke-width="2" stroke-linecap="round" stroke-linejoin="round"><path d="M1.8 15V7.5C1.8 6.5 2.5 5.8 3.5 5.8H11"/><path d="M7.8 2.2L11.2 5.8L7.8 9.4"/></g></svg>
<svg class="a" style="left:919.5px;top:719.85px;" width="13" height="16" viewBox="0 0 13 16"><g fill="none" stroke="#44546F" stroke-width="2" stroke-linecap="round" stroke-linejoin="round"><path d="M1.8 15V7.5C1.8 6.5 2.5 5.8 3.5 5.8H11"/><path d="M7.8 2.2L11.2 5.8L7.8 9.4"/></g></svg>
<div class="a m" style="right:565.40px;top:719.89px;font-size:15px;line-height:15px;color:#44546F;font-weight:400;font-style:italic;letter-spacing:0px;">Feb 25, 2024</div>
<div class="a" style="left:1056.2px;top:719.0500000000001px;width:80.2px;height:17.8px;background:#E4E6EA;border-radius:3px"></div>
<div class="a " style="left:1061.00px;top:724.49px;font-size:11.2px;line-height:11.2px;color:#172B4D;font-weight:700;font-style:normal;letter-spacing:0.2px;">BACKLOG</div>
<svg class="a" style="left:1121.9px;top:725.35px;" width="9" height="6" viewBox="0 0 9 6"><path d="M1 1L4.5 5L8 1" fill="none" stroke="#172B4D" stroke-width="2" stroke-linecap="round" stroke-linejoin="round"/></svg>
<div class="a" style="left:311px;top:763.05px;width:14.6px;height:14.6px;border:2px solid #DCDFE4;border-radius:3px;background:#fff"></div>
<div class="a m" style="left:340.40px;top:763.36px;font-size:14.5px;line-height:14.5px;color:#626F86;font-weight:400;font-style:normal;letter-spacing:0px;">3</div>
<svg class="a" style="left:366.5px;top:765.55px;" width="6.6" height="9.4" viewBox="0 0 6.6 9.4"><path d="M1 1L5.6 4.7L1 8.4" fill="none" stroke="#172B4D" stroke-width="2.2" stroke-linecap="round" stroke-linejoin="round"/></svg>
<svg class="a" style="left:383px;top:762.85px;" width="14.7" height="14.7" viewBox="0 0 16 16"><rect width="16" height="16" rx="2" fill="#8993A4"/><circle cx="8" cy="8" r="3.9" fill="none" stroke="#fff" stroke-width="1.8"/></svg>
<div class="a m" style="left:404.45px;top:762.19px;font-size:15px;line-height:15px;color:#0C66E4;font-weight:400;font-style:normal;letter-spacing:-0.3px;">MEIP-3</div>
<div class="a m" style="left:466.55px;top:762.19px;font-size:15px;line-height:15px;color:#172B4D;font-weight:400;font-style:normal;letter-spacing:0.29545454545454547px;">Training and Simulation</div>
<svg class="a" style="left:776px;top:762.15px;" width="13" height="16" viewBox="0 0 13 16"><g fill="none" stroke="#44546F" stroke-width="2" stroke-linecap="round" stroke-linejoin="round"><path d="M1.8 15V7.5C1.8 6.5 2.5 5.8 3.5 5.8H11"/><path d="M7.8 2.2L11.2 5.8L7.8 9.4"/></g></svg>
<div class="a m" style="right:708.20px;top:762.19px;font-size:15px;line-height:15px;color:#44546F;font-weight:400;font-style:italic;letter-spacing:0px;">Jan 01, 2024</div>
<svg class="a" style="left:919.5px;top:762.15px;" width="13" height="16" viewBox="0 0 13 16"><g fill="none" stroke="#44546F" stroke-width="2" stroke-linecap="round" stroke-linejoin="round"><path d="M1.8 15V7.5C1.8 6.5 2.5 5.8 3.5 5.8H11"/><path d="M7.8 2.2L11.2 5.8L7.8 9.4"/></g></svg>
<div class="a m" style="right:565.40px;top:762.19px;font-size:15px;line-height:15px;color:#44546F;font-weight:400;font-style:italic;letter-spacing:0px;">Mar 10, 2024</div>
<div class="a" style="left:1056.2px;top:761.35px;width:80.2px;height:17.8px;background:#F1F2F4;border-radius:3px"></div>
<div class="a " style="left:1061.00px;top:766.79px;font-size:11.2px;line-height:11.2px;color:#172B4D;font-weight:700;font-style:normal;letter-spacing:0.2px;">BACKLOG</div>
<svg class="a" style="left:1121.9px;top:767.65px;" width="9" height="6" viewBox="0 0 9 6"><path d="M1 1L4.5 5L8 1" fill="none" stroke="#172B4D" stroke-width="2" stroke-linecap="round" stroke-linejoin="round"/></svg>
<div class="a" style="left:311px;top:805.35px;width:14.6px;height:14.6px;border:2px solid #DCDFE4;border-radius:3px;background:#fff"></div>
<div class="a m" style="left:340.40px;top:805.66px;font-size:14.5px;line-height:14.5px;color:#626F86;font-weight:400;font-style:normal;letter-spacing:0px;">4</div>
<svg class="a" style="left:366.5px;top:807.8499999999999px;" width="6.6" height="9.4" viewBox="0 0 6.6 9.4"><path d="M1 1L5.6 4.7L1 8.4" fill="none" stroke="#172B4D" stroke-width="2.2" stroke-linecap="round" stroke-linejoin="round"/></svg>
<svg class="a" style="left:383px;top:805.15px;" width="14.7" height="14.7" viewBox="0 0 16 16"><rect width="16" height="16" rx="2" fill="#8993A4"/><circle cx="8" cy="8" r="3.9" fill="none" stroke="#fff" stroke-width="1.8"/></svg>
<div class="a m" style="left:404.45px;top:804.49px;font-size:15px;line-height:15px;color:#0C66E4;font-weight:400;font-style:normal;letter-spacing:-0.3px;">MEIP-4</div>
<div class="a m" style="left:466.55px;top:804.49px;font-size:15px;line-height:15px;color:#172B4D;font-weight:400;font-style:normal;letter-spacing:0.4934782608695652px;">Community and Networking</div>
<svg class="a" style="left:776px;top:804.4499999999999px;" width="13" height="16" viewBox="0 0 13 16"><g fill="none" stroke="#44546F" stroke-width="2" stroke-linecap="round" stroke-linejoin="round"><path d="M1.8 15V7.5C1.8 6.5 2.5 5.8 3.5 5.8H11"/><path d="M7.8 2.2L11.2 5.8L7.8 9.4"/></g></svg>
<div class="a m" style="right:708.20px;top:804.49px;font-size:15px;line-height:15px;color:#44546F;font-weight:400;font-style:italic;letter-spacing:0px;">Jan 01, 2024</div>
<svg class="a" style="left:919.5px;top:804.4499999999999px;" width="13" height="16" viewBox="0 0 13 16"><g fill="none" stroke="#44546F" stroke-width="2" stroke-linecap="round" stroke-linejoin="round"><path d="M1.8 15V7.5C1.8 6.5 2.5 5.8 3.5 5.8H11"/><path d="M7.8 2.2L11.2 5.8L7.8 9.4"/></g></svg>
<div class="a m" style="right:565.40px;top:804.49px;font-size:15px;line-height:15px;color:#44546F;font-weight:400;font-style:italic;letter-spacing:0px;">Mar 24, 2024</div>
<div class="a" style="left:1056.2px;top:803.65px;width:80.2px;height:17.8px;background:#E4E6EA;border-radius:3px"></div>
<div class="a " style="left:1061.00px;top:809.09px;font-size:11.2px;line-height:11.2px;color:#172B4D;font-weight:700;font-style:normal;letter-spacing:0.2px;">BACKLOG</div>
<svg class="a" style="left:1121.9px;top:809.9499999999999px;" width="9" height="6" viewBox="0 0 9 6"><path d="M1 1L4.5 5L8 1" fill="none" stroke="#172B4D" stroke-width="2" stroke-linecap="round" stroke-linejoin="round"/></svg>
<div class="a" style="left:311px;top:847.65px;width:14.6px;height:14.6px;border:2px solid #DCDFE4;border-radius:3px;background:#fff"></div>
<div class="a m" style="left:340.40px;top:847.96px;font-size:14.5px;line-height:14.5px;color:#626F86;font-weight:400;font-style:normal;letter-spacing:0px;">5</div>
<svg class="a" style="left:366.5px;top:850.1499999999999px;" width="6.6" height="9.4" viewBox="0 0 6.6 9.4"><path d="M1 1L5.6 4.7L1 8.4" fill="none" stroke="#172B4D" stroke-width="2.2" stroke-linecap="round" stroke-linejoin="round"/></svg>
<svg class="a" style="left:383px;top:847.4499999999999px;" width="14.7" height="14.7" viewBox="0 0 16 16"><rect width="16" height="16" rx="2" fill="#8993A4"/><circle cx="8" cy="8" r="3.9" fill="none" stroke="#fff" stroke-width="1.8"/></svg>
<div class="a m" style="left:404.45px;top:846.79px;font-size:15px;line-height:15px;color:#0C66E4;font-weight:400;font-style:normal;letter-spacing:-0.3px;">MEIP-5</div>
<div class="a m" style="left:465.55px;top:846.79px;font-size:15px;line-height:15px;color:#172B4D;font-weight:400;font-style:normal;letter-spacing:0.36363636363636365px;">Funding and Sponsorship</div>
<svg class="a" style="left:776px;top:846.7499999999999px;" width="13" height="16" viewBox="0 0 13 16"><g fill="none" stroke="#44546F" stroke-width="2" stroke-linecap="round" stroke-linejoin="round"><path d="M1.8 15V7.5C1.8 6.5 2.5 5.8 3.5 5.8H11"/><path d="M7.8 2.2L11.2 5.8L7.8 9.4"/></g></svg>
<div class="a m" style="right:708.20px;top:846.79px;font-size:15px;line-height:15px;color:#44546F;font-weight:400;font-style:italic;letter-spacing:0px;">Jan 29, 2024</div>
<svg class="a" style="left:919.5px;top:846.7499999999999px;" width="13" height="16" viewBox="0 0 13 16"><g fill="none" stroke="#44546F" stroke-width="2" stroke-linecap="round" stroke-linejoin="round"><path d="M1.8 15V7.5C1.8 6.5 2.5 5.8 3.5 5.8H11"/><path d="M7.8 2.2L11.2 5.8L7.8 9.4"/></g></svg>
<div class="a m" style="right:565.40px;top:846.79px;font-size:15px;line-height:15px;color:#44546F;font-weight:400;font-style:italic;letter-spacing:0px;">Mar 24, 2024</div>
<div class="a" style="left:1056.2px;top:845.9499999999999px;width:80.2px;height:17.8px;background:#F1F2F4;border-radius:3px"></div>
<div class="a " style="left:1061.00px;top:851.39px;font-size:11.2px;line-height:11.2px;color:#172B4D;font-weight:700;font-style:normal;letter-spacing:0.2px;">BACKLOG</div>
<svg class="a" style="left:1121.9px;top:852.2499999999999px;" width="9" height="6" viewBox="0 0 9 6"><path d="M1 1L4.5 5L8 1" fill="none" stroke="#172B4D" stroke-width="2" stroke-linecap="round" stroke-linejoin="round"/></svg>
<div class="a" style="left:311px;top:889.95px;width:14.6px;height:14.6px;border:2px solid #DCDFE4;border-radius:3px;background:#fff"></div>
<div class="a m" style="left:340.40px;top:890.26px;font-size:14.5px;line-height:14.5px;color:#626F86;font-weight:400;font-style:normal;letter-spacing:0px;">6</div>
<svg class="a" style="left:366.5px;top:892.4499999999999px;" width="6.6" height="9.4" viewBox="0 0 6.6 9.4"><path d="M1 1L5.6 4.7L1 8.4" fill="none" stroke="#172B4D" stroke-width="2.2" stroke-linecap="round" stroke-linejoin="round"/></svg>
<svg class="a" style="left:383px;top:889.75px;" width="14.7" height="14.7" viewBox="0 0 16 16"><rect width="16" height="16" rx="2" fill="#8993A4"/><circle cx="8" cy="8" r="3.9" fill="none" stroke="#fff" stroke-width="1.8"/></svg>
<div class="a m" style="left:404.45px;top:889.09px;font-size:15px;line-height:15px;color:#0C66E4;font-weight:400;font-style:normal;letter-spacing:-0.3px;">MEIP-6</div>
<div class="a m" style="left:465.55px;top:889.09px;font-size:15px;line-height:15px;color:#172B4D;font-weight:400;font-style:normal;letter-spacing:0.39761904761904765px;">Equipment and Supplies</div>
<svg class="a" style="left:776px;top:889.05px;" width="13" height="16" viewBox="0 0 13 16"><g fill="none" stroke="#44546F" stroke-width="2" stroke-linecap="round" stroke-linejoin="round"><path d="M1.8 15V7.5C1.8 6.5 2.5 5.8 3.5 5.8H11"/><path d="M7.8 2.2L11.2 5.8L7.8 9.4"/></g></svg>
<svg class="a" style="left:919.5px;top:889.05px;" width="13" height="16" viewBox="0 0 13 16"><g fill="none" stroke="#44546F" stroke-width="2" stroke-linecap="round" stroke-linejoin="round"><path d="M1.8 15V7.5C1.8 6.5 2.5 5.8 3.5 5.8H11"/><path d="M7.8 2.2L11.2 5.8L7.8 9.4"/></g></svg>
<div class="a m" style="right:565.40px;top:889.09px;font-size:15px;line-height:15px;color:#44546F;font-weight:400;font-style:italic;letter-spacing:0px;">Mar 24, 2024</div>
<div class="a" style="left:1056.2px;top:888.25px;width:80.2px;height:17.8px;background:#E4E6EA;border-radius:3px"></div>
<div class="a " style="left:1061.00px;top:893.69px;font-size:11.2px;line-height:11.2px;color:#172B4D;font-weight:700;font-style:normal;letter-spacing:0.2px;">BACKLOG</div>
<svg class="a" style="left:1121.9px;top:894.55px;" width="9" height="6" viewBox="0 0 9 6"><path d="M1 1L4.5 5L8 1" fill="none" stroke="#172B4D" stroke-width="2" stroke-linecap="round" stroke-linejoin="round"/></svg>
<div class="a" style="left:311px;top:932.25px;width:14.6px;height:14.6px;border:2px solid #DCDFE4;border-radius:3px;background:#fff"></div>
<div class="a m" style="left:340.40px;top:932.56px;font-size:14.5px;line-height:14.5px;color:#626F86;font-weight:400;font-style:normal;letter-spacing:0px;">7</div>
<svg class="a" style="left:366.5px;top:934.7499999999999px;" width="6.6" height="9.4" viewBox="0 0 6.6 9.4"><path d="M1 1L5.6 4.7L1 8.4" fill="none" stroke="#172B4D" stroke-width="2.2" stroke-linecap="round" stroke-linejoin="round"/></svg>
<svg class="a" style="left:383px;top:932.05px;" width="14.7" height="14.7" viewBox="0 0 16 16"><rect width="16" height="16" rx="2" fill="#8993A4"/><circle cx="8" cy="8" r="3.9" fill="none" stroke="#fff" stroke-width="1.8"/></svg>
<div class="a m" style="left:404.45px;top:931.39px;font-size:15px;line-height:15px;color:#0C66E4;font-weight:400;font-style:normal;letter-spacing:-0.3px;">MEIP-7</div>
<div class="a m" style="left:465.95px;top:931.39px;font-size:15px;line-height:15px;color:#172B4D;font-weight:400;font-style:normal;letter-spacing:0.355px;">Advanced Technologies</div>
<svg class="a" style="left:776px;top:931.3499999999999px;" width="13" height="16" viewBox="0 0 13 16"><g fill="none" stroke="#44546F" stroke-width="2" stroke-linecap="round" stroke-linejoin="round"><path d="M1.8 15V7.5C1.8 6.5 2.5 5.8 3.5 5.8H11"/><path d="M7.8 2.2L11.2 5.8L7.8 9.4"/></g></svg>
<svg class="a" style="left:919.5px;top:931.3499999999999px;" width="13" height="16" viewBox="0 0 13 16"><g fill="none" stroke="#44546F" stroke-width="2" stroke-linecap="round" stroke-linejoin="round"><path d="M1.8 15V7.5C1.8 6.5 2.5 5.8 3.5 5.8H11"/><path d="M7.8 2.2L11.2 5.8L7.8 9.4"/></g></svg>
<div class="a m" style="right:565.40px;top:931.39px;font-size:15px;line-height:15px;color:#44546F;font-weight:400;font-style:italic;letter-spacing:0px;">Mar 24, 2024</div>
<div class="a" style="left:1056.2px;top:930.55px;width:80.2px;height:17.8px;background:#F1F2F4;border-radius:3px"></div>
<div class="a " style="left:1061.00px;top:935.99px;font-size:11.2px;line-height:11.2px;color:#172B4D;font-weight:700;font-style:normal;letter-spacing:0.2px;">BACKLOG</div>
<svg class="a" style="left:1121.9px;top:936.8499999999999px;" width="9" height="6" viewBox="0 0 9 6"><path d="M1 1L4.5 5L8 1" fill="none" stroke="#172B4D" stroke-width="2" stroke-linecap="round" stroke-linejoin="round"/></svg>
<svg class="a" style="left:318px;top:979px;" width="9" height="6" viewBox="0 0 9 6"><path d="M1 1L4.5 5L8 1" fill="none" stroke="#44546F" stroke-width="2" stroke-linecap="round" stroke-linejoin="round"/></svg>
<div class="a " style="left:336.00px;top:974.54px;font-size:15px;line-height:15px;color:#44546F;font-weight:700;font-style:normal;letter-spacing:-0.1px;">0 issues without parent</div>
<div class="a" style="left:1212.5px;top:229px;width:1px;height:26px;background:#DCDFE4;"></div>
<div class="a" style="left:1475px;top:229px;width:1px;height:26px;background:#DCDFE4;"></div>
<div class="a " style="left:1222.80px;top:236.90px;font-size:13px;line-height:13px;color:#44546F;font-weight:700;font-style:normal;letter-spacing:0.1px;">Jan ’24</div>
<div class="a " style="left:1485.00px;top:236.90px;font-size:13px;line-height:13px;color:#44546F;font-weight:700;font-style:normal;letter-spacing:0.1px;">Feb ’24</div>
<div class="a m" style="left:1212.90px;top:264.17px;font-size:12.5px;line-height:12.5px;color:#44546F;font-weight:400;font-style:normal;letter-spacing:0.3px;">1</div>
<div class="a m" style="left:1272.19px;top:264.17px;font-size:12.5px;line-height:12.5px;color:#44546F;font-weight:400;font-style:normal;letter-spacing:0.3px;">8</div>
<div class="a m" style="left:1331.48px;top:264.17px;font-size:12.5px;line-height:12.5px;color:#44546F;font-weight:400;font-style:normal;letter-spacing:0.3px;">15</div>
<div class="a m" style="left:1390.77px;top:264.17px;font-size:12.5px;line-height:12.5px;color:#44546F;font-weight:400;font-style:normal;letter-spacing:0.3px;">22</div>
<div class="a m" style="left:1450.06px;top:264.17px;font-size:12.5px;line-height:12.5px;color:#44546F;font-weight:400;font-style:normal;letter-spacing:0.3px;">29</div>
<div class="a m" style="left:1509.35px;top:264.17px;font-size:12.5px;line-height:12.5px;color:#44546F;font-weight:400;font-style:normal;letter-spacing:0.3px;">5</div>
<div class="a m" style="left:1568.64px;top:264.17px;font-size:12.5px;line-height:12.5px;color:#44546F;font-weight:400;font-style:normal;letter-spacing:0.3px;">12</div>
<div class="a" style="left:1212px;top:326px;width:1px;height:674px;background:#E9EAEE;"></div>
<div class="a" style="left:1474.5px;top:326px;width:1px;height:674px;background:#E9EAEE;"></div>
<div class="a" style="left:1450.9px;top:296.4px;width:14.6px;height:14.6px;border-radius:50%;background:#1D7AFC"></div>
<div class="a" style="left:1187.8px;top:334.75px;width:380.20px;height:24.8px;background:repeating-linear-gradient(120deg,#44546F 0 9.11px,#2C3A4F 9.11px 25.01px,#44546F 25.01px 31.8px);border-radius:0 4px 4px 0;box-shadow:inset 0 0.8px 0 rgba(9,30,66,0.55),inset 0 -0.8px 0 rgba(9,30,66,0.55),inset -0.8px 0 0 rgba(9,30,66,0.55);overflow:hidden"><div style="position:absolute;left:0;top:0;width:30px;height:100%;background:linear-gradient(90deg,rgba(255,255,255,0.25),rgba(255,255,255,0))"></div></div>
<div class="a" style="left:1213px;top:377.05px;width:237.00px;height:24.8px;background:#44546F;border-radius:4px 4px 4px 4px;box-shadow:inset 0 0 0 0.8px rgba(9,30,66,0.55);overflow:hidden"><div style="position:absolute;inset:0;background:repeating-linear-gradient(120deg,#44546F 0 15.76px,#2C3A4F 15.76px 31.66px,#44546F 31.66px 31.8px);-webkit-mask-image:linear-gradient(90deg,#000 0%,rgba(0,0,0,0.7) 35%,rgba(0,0,0,0) 80%)"></div></div>
<div class="a" style="left:1187.8px;top:419.35px;width:262.20px;height:24.8px;background:linear-gradient(90deg,#CDD1D9 0%,#A3AAB8 30%,#78839A 62%,#44546F 100%);border-radius:0 4px 4px 0;overflow:hidden"></div>
<div class="a" style="left:1213px;top:461.65px;width:355.00px;height:24.8px;background:#44546F;border-radius:4px 4px 4px 4px;box-shadow:inset 0 0 0 0.8px rgba(9,30,66,0.55);overflow:hidden"><div style="position:absolute;inset:0;background:repeating-linear-gradient(120deg,#44546F 0 15.76px,#2C3A4F 15.76px 31.66px,#44546F 31.66px 31.8px);-webkit-mask-image:linear-gradient(90deg,#000 0%,rgba(0,0,0,0.55) 35%,rgba(0,0,0,0) 70%)"></div></div>
<svg class="a" style="left:1550px;top:468.04999999999995px;" width="12" height="12" viewBox="0 0 12 12"><g fill="none" stroke="#fff" stroke-width="1.5"><rect x="0.9" y="5.9" width="6.6" height="3.6" rx="1.8" transform="rotate(-45 4.2 7.7)"/><rect x="4.5" y="2.5" width="6.6" height="3.6" rx="1.8" transform="rotate(-45 7.8 4.3)"/></g></svg>
<div class="a" style="left:1213px;top:503.95px;width:118.00px;height:24.8px;background:#44546F;border-radius:4px 4px 4px 4px;box-shadow:inset 0 0 0 0.8px rgba(9,30,66,0.55);overflow:hidden"></div>
<svg class="a" style="left:1313px;top:510.35px;" width="12" height="12" viewBox="0 0 12 12"><g fill="none" stroke="#fff" stroke-width="1.5"><rect x="0.9" y="5.9" width="6.6" height="3.6" rx="1.8" transform="rotate(-45 4.2 7.7)"/><rect x="4.5" y="2.5" width="6.6" height="3.6" rx="1.8" transform="rotate(-45 7.8 4.3)"/></g></svg>
<div class="a" style="left:1213px;top:546.25px;width:118.00px;height:24.8px;background:#44546F;border-radius:4px 4px 4px 4px;box-shadow:inset 0 0 0 0.8px rgba(9,30,66,0.55);overflow:hidden"></div>
<div class="a" style="left:1331px;top:588.55px;width:119.00px;height:24.8px;background:#44546F;border-radius:4px 4px 4px 4px;box-shadow:inset 0 0 0 0.8px rgba(9,30,66,0.55);overflow:hidden"></div>
<div class="a" style="left:1331px;top:630.85px;width:119.00px;height:24.8px;background:#44546F;border-radius:4px 4px 4px 4px;box-shadow:inset 0 0 0 0.8px rgba(9,30,66,0.55);overflow:hidden"></div>
<div class="a" style="left:1450px;top:673.15px;width:118.00px;height:24.8px;background:#44546F;border-radius:4px 4px 4px 4px;box-shadow:inset 0 0 0 0.8px rgba(9,30,66,0.55);overflow:hidden"></div>
<svg class="a" style="left:1430px;top:590px;" width="40" height="100" viewBox="1430 590 40 100"><g fill="none" stroke="#738496" stroke-width="1.6"><path d="M1450 601 C1462 601 1464 608 1462 616 C1459 628 1452 640 1446 652 C1440 664 1437 672 1438 678 C1439 683 1444 685 1450 685"/><path d="M1450 643 C1458 643 1463 645 1462 651 C1460 658 1452 666 1444 674 C1439 679 1440 684 1450 685"/></g></svg>
<div class="a" style="left:1213px;top:715.45px;width:407.00px;height:24.8px;background:repeating-linear-gradient(120deg,#44546F 0 15.76px,#2C3A4F 15.76px 31.66px,#44546F 31.66px 31.8px);border-radius:4px 0 0 4px;box-shadow:inset 0 0.8px 0 rgba(9,30,66,0.55),inset 0 -0.8px 0 rgba(9,30,66,0.55),inset 0.8px 0 0 rgba(9,30,66,0.55);overflow:hidden"><div style="position:absolute;left:0;top:0;width:58px;height:100%;background:linear-gradient(90deg,rgba(241,242,244,0.85) 0%,rgba(241,242,244,0.5) 45%,rgba(241,242,244,0) 100%)"></div></div>
<svg class="a" style="left:1559.0px;top:717.35px;" width="21" height="21" viewBox="0 0 21 21"><circle cx="10.5" cy="10.5" r="10.3" fill="#172B4D"/><path d="M5.8 10.5H14.8M11 6.8L14.8 10.5L11 14.2" fill="none" stroke="#fff" stroke-width="2.1" stroke-linecap="round" stroke-linejoin="round"/></svg>
<div class="a" style="left:1213px;top:757.75px;width:407.00px;height:24.8px;background:repeating-linear-gradient(120deg,#44546F 0 15.76px,#2C3A4F 15.76px 31.66px,#44546F 31.66px 31.8px);border-radius:4px 0 0 4px;box-shadow:inset 0 0.8px 0 rgba(9,30,66,0.55),inset 0 -0.8px 0 rgba(9,30,66,0.55),inset 0.8px 0 0 rgba(9,30,66,0.55);overflow:hidden"></div>
<svg class="a" style="left:1559.0px;top:759.65px;" width="21" height="21" viewBox="0 0 21 21"><path d="M5.8 10.5H14.8M11 6.8L14.8 10.5L11 14.2" fill="none" stroke="#fff" stroke-width="2.1" stroke-linecap="round" stroke-linejoin="round"/></svg>
<div class="a" style="left:1213px;top:800.05px;width:407.00px;height:24.8px;background:repeating-linear-gradient(120deg,#44546F 0 15.76px,#2C3A4F 15.76px 31.66px,#44546F 31.66px 31.8px);border-radius:4px 0 0 4px;box-shadow:inset 0 0.8px 0 rgba(9,30,66,0.55),inset 0 -0.8px 0 rgba(9,30,66,0.55),inset 0.8px 0 0 rgba(9,30,66,0.55);overflow:hidden"></div>
<svg class="a" style="left:1559.0px;top:801.9499999999999px;" width="21" height="21" viewBox="0 0 21 21"><path d="M5.8 10.5H14.8M11 6.8L14.8 10.5L11 14.2" fill="none" stroke="#fff" stroke-width="2.1" stroke-linecap="round" stroke-linejoin="round"/></svg>
<div class="a" style="left:1450px;top:842.35px;width:170.00px;height:24.8px;background:repeating-linear-gradient(120deg,#44546F 0 15.76px,#2C3A4F 15.76px 31.66px,#44546F 31.66px 31.8px);border-radius:4px 0 0 4px;box-shadow:inset 0 0.8px 0 rgba(9,30,66,0.55),inset 0 -0.8px 0 rgba(9,30,66,0.55),inset 0.8px 0 0 rgba(9,30,66,0.55);overflow:hidden"></div>
<svg class="a" style="left:1559.0px;top:844.2499999999999px;" width="21" height="21" viewBox="0 0 21 21"><path d="M5.8 10.5H14.8M11 6.8L14.8 10.5L11 14.2" fill="none" stroke="#fff" stroke-width="2.1" stroke-linecap="round" stroke-linejoin="round"/></svg>
<div class="a" style="left:1463px;top:884.65px;width:157.00px;height:24.8px;background:repeating-linear-gradient(120deg,#C9CDD5 0 15.76px,#84878E 15.76px 31.66px,#C9CDD5 31.66px 31.8px);border-radius:4px 0 0 4px;overflow:hidden"><div style="position:absolute;left:0;top:0;width:100%;height:100%;background:linear-gradient(90deg,rgba(241,242,244,0.55) 0%,rgba(241,242,244,0) 60%)"></div></div>
<svg class="a" style="left:1559.0px;top:886.55px;" width="21" height="21" viewBox="0 0 21 21"><circle cx="10.5" cy="10.5" r="10.3" fill="#172B4D"/><path d="M5.8 10.5H14.8M11 6.8L14.8 10.5L11 14.2" fill="none" stroke="#fff" stroke-width="2.1" stroke-linecap="round" stroke-linejoin="round"/></svg>
<div class="a" style="left:1560px;top:926.95px;width:60.00px;height:24.8px;background:repeating-linear-gradient(120deg,#C9CDD5 0 15.76px,#84878E 15.76px 31.66px,#C9CDD5 31.66px 31.8px);border-radius:4px 0 0 4px;overflow:hidden"></div>
<div class="a" style="left:1559px;top:929.0px;width:21px;height:21px;border-radius:50%;background:#172B4D"></div>
<div class="a" style="left:1189px;top:930px;width:385px;height:44px;background:#fff;border:1px solid #DFE1E6;border-radius:4px;box-shadow:0 1px 2px rgba(9,30,66,0.12)"></div>
<svg class="a" style="left:1200.5px;top:941.5px;" width="21" height="21" viewBox="0 0 21 21"><circle cx="10.5" cy="10.5" r="10.4" fill="#172B4D"/><path d="M8.8 6.8L12.5 10.5L8.8 14.2" fill="none" stroke="#fff" stroke-width="2.1" stroke-linecap="round" stroke-linejoin="round"/></svg>
<div class="a" style="left:1232.8px;top:940px;width:1px;height:24px;background:#DCDFE4;"></div>
<div class="a" style="left:1314.5px;top:940px;width:1px;height:24px;background:#DCDFE4;"></div>
<div class="a" style="left:1391.7px;top:940px;width:1px;height:24px;background:#DCDFE4;"></div>
<div class="a" style="left:1487.8px;top:940px;width:1px;height:24px;background:#DCDFE4;"></div>
<div class="a" style="left:1530.7px;top:940px;width:1px;height:24px;background:#DCDFE4;"></div>
<svg class="a" style="left:1250.5px;top:944.5px;" width="9" height="15" viewBox="0 0 9 15"><path d="M7.5 1.5L1.8 7.5L7.5 13.5" fill="none" stroke="#172B4D" stroke-width="2.2" stroke-linecap="round" stroke-linejoin="round"/></svg>
<svg class="a" style="left:1288px;top:944.5px;" width="9" height="15" viewBox="0 0 9 15"><path d="M1.5 1.5L7.2 7.5L1.5 13.5" fill="none" stroke="#172B4D" stroke-width="2.2" stroke-linecap="round" stroke-linejoin="round"/></svg>
<div class="a m" style="left:1332.50px;top:944.84px;font-size:15px;line-height:15px;color:#172B4D;font-weight:400;font-style:normal;letter-spacing:0.15px;">Today</div>
<div class="a m" style="left:1407.30px;top:944.84px;font-size:15px;line-height:15px;color:#172B4D;font-weight:400;font-style:normal;letter-spacing:0.35px;">Months</div>
<svg class="a" style="left:1467.5px;top:950px;" width="9.5" height="6.5" viewBox="0 0 9.5 6.5"><path d="M1 1L4.75 5.5L8.5 1" fill="none" stroke="#172B4D" stroke-width="2.1" stroke-linecap="round" stroke-linejoin="round"/></svg>
<svg class="a" style="left:1498.5px;top:941.5px;" width="21" height="21" viewBox="0 0 21 21"><circle cx="10.5" cy="10.5" r="10.4" fill="#172B4D"/><circle cx="10.5" cy="6" r="1.5" fill="#fff"/><path d="M10.5 9.3V15.5" stroke="#fff" stroke-width="2.6" stroke-linecap="round"/></svg>
<svg class="a" style="left:1543px;top:944px;" width="20" height="18" viewBox="0 0 20 18"><g fill="none" stroke="#172B4D" stroke-width="2" stroke-linecap="round" stroke-linejoin="round"><path d="M12.5 1.5H18.5V7.5M18.5 1.5L12 8M7.5 16.5H1.5V10.5M1.5 16.5L8 10"/></g></svg>
<div class="a" style="left:1336px;top:989.5px;width:11px;height:11px;border-radius:50%;background:#A5A8AE"></div>
</body></html>
